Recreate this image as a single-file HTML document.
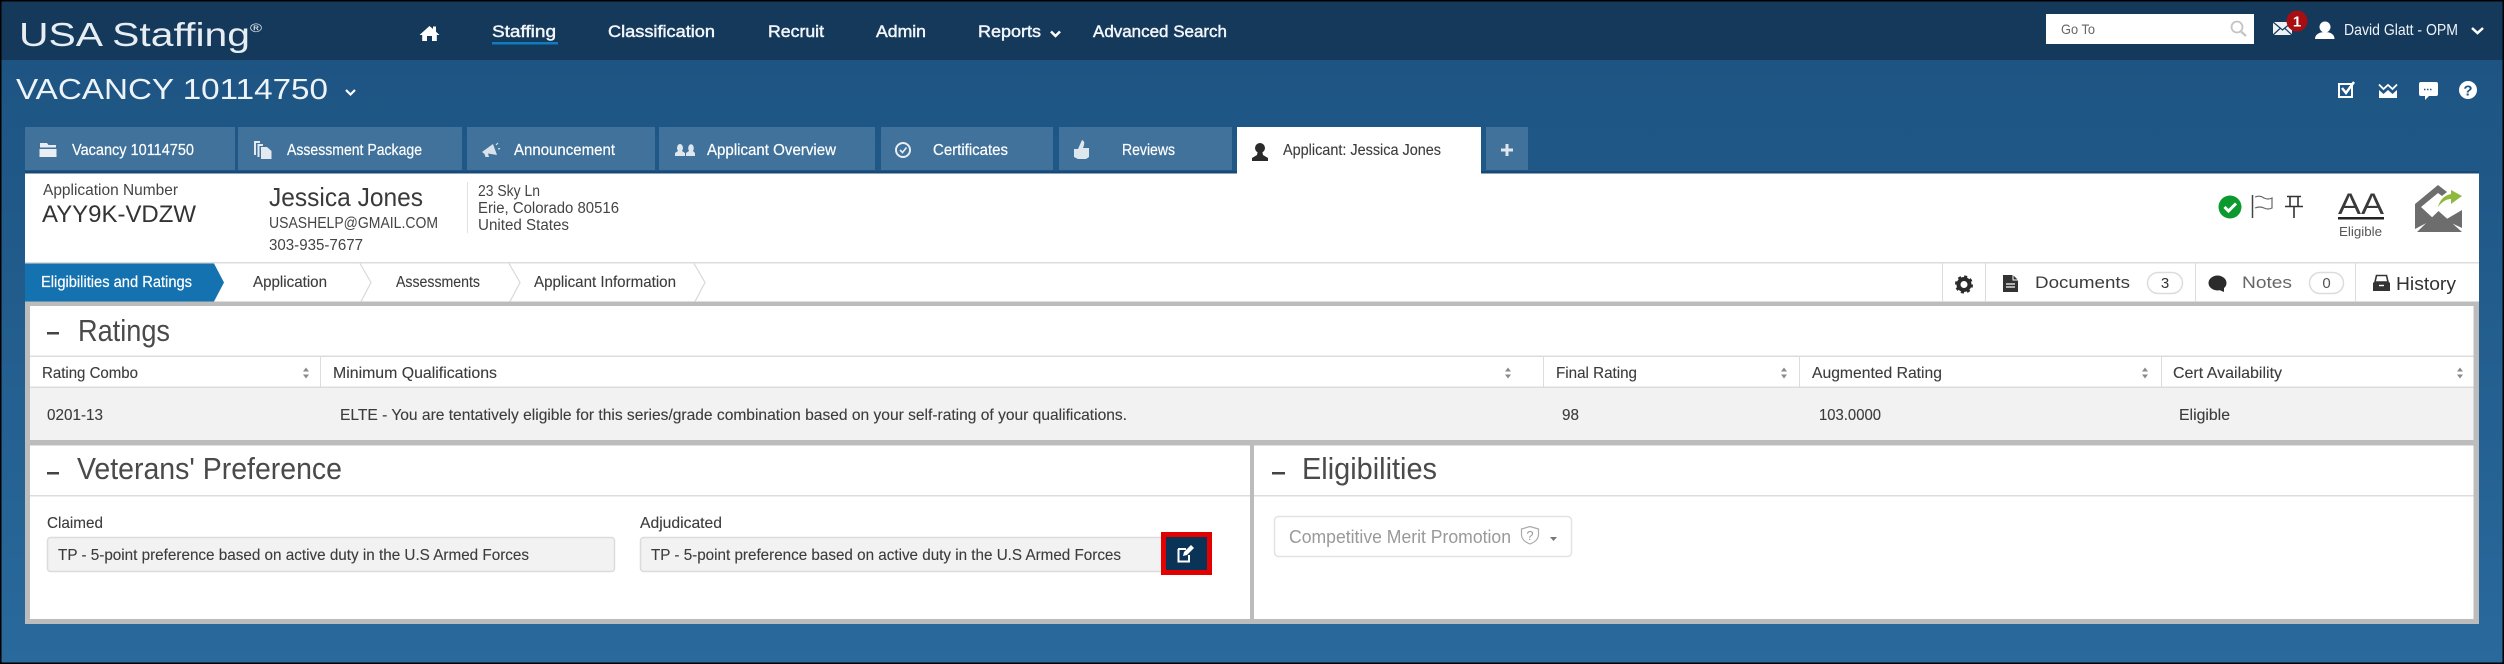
<!DOCTYPE html>
<html><head><meta charset="utf-8"><style>
html,body{margin:0;padding:0;background:#000}
svg{display:block}
text{font-family:"Liberation Sans",sans-serif;white-space:pre}
.n{font-size:16.500px;fill:#f2f6fa;stroke:#f2f6fa;stroke-width:.45px}
.t{font-size:15.500px;fill:#fff;stroke:#fff;stroke-width:.2px}
.d{font-size:15.800px;fill:#3c3c3c;stroke:#3c3c3c;stroke-width:.12px}
.h{font-size:31px;fill:#4a4a4a}
</style></head><body>
<svg xmlns="http://www.w3.org/2000/svg" width="2504" height="664" viewBox="0 0 2504 664">
<defs>
<linearGradient id="bg" x1="0" y1="0" x2="0" y2="1"><stop offset="0" stop-color="#1c5280"/><stop offset="1" stop-color="#29699c"/></linearGradient>
<g id="sort"><path d="M-3 -1.500 L0 -5.500 L3 -1.500Z M-3 1.500 L0 5.500 L3 1.500Z" fill="#8a8a8a"/></g>
</defs>
<rect width="2504" height="664" fill="#000"/>
<rect x="1.500" y="1.500" width="2501" height="661" fill="url(#bg)"/>
<rect x="1.500" y="1.500" width="2501" height="58.500" fill="#15395b"/>

<!-- header -->
<text x="19" y="46" font-size="33" fill="#e6edf3" textLength="231" lengthAdjust="spacingAndGlyphs">USA Staffing</text>
<text x="250" y="32" font-size="12" fill="#e8eef4" textLength="12" lengthAdjust="spacingAndGlyphs">®</text>
<path d="M429.500 26 L433 29 V26.500 H436 V31.800 L439.500 35 H436.800 V41 H432 V36 H427 V41 H422.200 V35 H419.500Z" fill="#fff"/>
<text class="n" x="492" y="37" textLength="64" lengthAdjust="spacingAndGlyphs">Staffing</text>
<rect x="492" y="42" width="66" height="2.500" fill="#0f7cc0"/>
<text class="n" x="608" y="37" textLength="107" lengthAdjust="spacingAndGlyphs">Classification</text>
<text class="n" x="768" y="37" textLength="56" lengthAdjust="spacingAndGlyphs">Recruit</text>
<text class="n" x="876" y="37" textLength="50" lengthAdjust="spacingAndGlyphs">Admin</text>
<text class="n" x="978" y="37" textLength="63" lengthAdjust="spacingAndGlyphs">Reports</text>
<path d="M1051 31.500 L1055.500 36 L1060 31.500" fill="none" stroke="#fff" stroke-width="2.500"/>
<text class="n" x="1093" y="37" textLength="134" lengthAdjust="spacingAndGlyphs">Advanced Search</text>

<rect x="2046" y="14" width="208" height="30" fill="#fff"/>
<text x="2061" y="34" font-size="14" fill="#666" textLength="34" lengthAdjust="spacingAndGlyphs">Go To</text>
<circle cx="2237" cy="27" r="5.500" fill="none" stroke="#c4c4c4" stroke-width="1.800"/><path d="M2241 31.500 L2246 36" stroke="#c4c4c4" stroke-width="2.200"/>
<path d="M2273 22 H2292 V35 H2273Z" fill="#eef2f6"/><path d="M2273 22 L2282.500 30 L2292 22 M2273 35 L2280 28.500 M2292 35 L2285 28.500" fill="none" stroke="#15395b" stroke-width="1.200"/>
<circle cx="2297" cy="21" r="10.500" fill="#a80d12"/>
<text x="2297" y="26.500" font-size="15" font-weight="700" fill="#fff" text-anchor="middle">1</text>
<circle cx="2325" cy="27" r="5.500" fill="#fff"/><path d="M2315 39 C2315 34 2320 32 2325 32 C2330 32 2334.500 34 2334.500 39Z" fill="#fff"/>
<text x="2344" y="35" font-size="16" fill="#eef3f8" textLength="114" lengthAdjust="spacingAndGlyphs">David Glatt - OPM</text>
<path d="M2472 28 L2477.500 33 L2483 28" fill="none" stroke="#fff" stroke-width="2.500"/>

<!-- title row -->
<text x="16" y="99" font-size="29" fill="#eef3f7" textLength="312" lengthAdjust="spacingAndGlyphs">VACANCY 10114750</text>
<path d="M346 90 L350.500 94.500 L355 90" fill="none" stroke="#fff" stroke-width="2.200"/>
<rect x="2339" y="84" width="13" height="13" fill="none" stroke="#fff" stroke-width="2"/><path d="M2342 88 L2346 93 L2354 82" fill="none" stroke="#fff" stroke-width="2.500"/>
<path d="M2379 84.500 L2383.500 89 L2388 85 L2392.500 89 L2397 84.500" fill="none" stroke="#fff" stroke-width="1.800"/><path d="M2379 90 L2383.500 94 L2388 90 L2392.500 94 L2397 90 V98 H2379Z" fill="#fff"/>
<path d="M2421 82 H2436 Q2438 82 2438 84 V94 Q2438 96 2436 96 H2429 L2425 100 V96 H2421 Q2419 96 2419 94 V84 Q2419 82 2421 82Z" fill="#fff"/><path d="M2424 89.500 H2433" stroke="#1d5481" stroke-width="1.500" stroke-dasharray="1.500 1.500"/>
<circle cx="2468" cy="90" r="9" fill="#fff"/><text x="2468" y="95.500" font-size="15" font-weight="700" fill="#1d5481" text-anchor="middle">?</text>

<!-- tabs -->
<g fill="#41729b">
<rect x="25" y="127" width="210" height="43"/><rect x="238" y="127" width="224" height="43"/><rect x="467" y="127" width="188" height="43"/><rect x="659" y="127" width="216" height="43"/><rect x="881" y="127" width="172" height="43"/><rect x="1059" y="127" width="173" height="43"/><rect x="1486" y="127" width="42" height="43"/>
</g>
<rect x="25" y="171" width="2454" height="2.500" fill="#174a76"/>
<rect x="1237" y="127" width="244" height="47" fill="#fff"/>
<path d="M40 143 H47 L48.500 145 H56 V147.500 H40Z M39.500 149 H56.500 V157 H39.500Z" fill="#e8eef3"/>
<path d="M254 141 H260 V143 H256 V155 H254Z M257.500 144 H263 V146 H259.500 V157 H257.500Z M261 147 H267 L271.500 151 V159 H261Z" fill="#e3eaf0"/>
<path d="M482 152 L493 144 L497 155 L488 153.500 L489 157 L485.500 157 L484.500 154Z" fill="#d8e2ea"/><path d="M496 145 L498 143 M498 149 L500 148.500" stroke="#d8e2ea" stroke-width="1.200"/>
<path d="M675 156 V153 L678 151 A3 4 0 1 1 682 151 L685 153 V156Z M686 156 V153 L689 151 A2.800 4 0 1 1 693 151 L695 153 V156Z" fill="#dfe7ee"/>
<circle cx="903" cy="150" r="7" fill="none" stroke="#e8eef3" stroke-width="2"/><path d="M900 150 L902.500 152.500 L906.500 147.500" fill="none" stroke="#e8eef3" stroke-width="1.600"/>
<path d="M1074 149 H1078 L1082 140 Q1085 141 1084 145 L1083 148 H1089 V157 L1086 159 H1078 L1074 157Z" fill="#dfe7ee"/>
<circle cx="1260" cy="148" r="5" fill="#2b2b2b"/><path d="M1258 150 H1262 L1263 155 L1268 158 V161 H1252 V158 L1257 155Z" fill="#2b2b2b"/>
<path d="M1505.500 144 H1508.500 V148.500 H1513 V151.500 H1508.500 V156 H1505.500 V151.500 H1501 V148.500 H1505.500Z" fill="#dfe7ee"/>
<text class="t" x="72" y="155" textLength="122" lengthAdjust="spacingAndGlyphs">Vacancy 10114750</text>
<text class="t" x="287" y="155" textLength="135" lengthAdjust="spacingAndGlyphs">Assessment Package</text>
<text class="t" x="514" y="155" textLength="101" lengthAdjust="spacingAndGlyphs">Announcement</text>
<text class="t" x="707" y="155" textLength="129" lengthAdjust="spacingAndGlyphs">Applicant Overview</text>
<text class="t" x="933" y="155" textLength="75" lengthAdjust="spacingAndGlyphs">Certificates</text>
<text class="t" x="1122" y="155" textLength="53" lengthAdjust="spacingAndGlyphs">Reviews</text>
<text class="d" x="1283" y="155" textLength="158" lengthAdjust="spacingAndGlyphs">Applicant: Jessica Jones</text>

<!-- white panel -->
<rect x="25" y="173.500" width="2454" height="450.500" fill="#bcbcbc"/>
<rect x="25" y="173.500" width="2454" height="128" fill="#fff"/>
<text x="43" y="195" font-size="16" fill="#444" textLength="135" lengthAdjust="spacingAndGlyphs">Application Number</text>
<text x="42" y="222" font-size="24" fill="#333" textLength="154" lengthAdjust="spacingAndGlyphs">AYY9K-VDZW</text>
<text x="269" y="206" font-size="26" fill="#3a3a3a" textLength="154" lengthAdjust="spacingAndGlyphs">Jessica Jones</text>
<text x="269" y="228" font-size="15.500" fill="#444" textLength="169" lengthAdjust="spacingAndGlyphs">USASHELP@GMAIL.COM</text>
<text x="269" y="250" font-size="15.500" fill="#444" textLength="94" lengthAdjust="spacingAndGlyphs">303-935-7677</text>
<rect x="467" y="182" width="1" height="51" fill="#e2e2e2"/>
<text x="478" y="196" font-size="15.500" fill="#444" textLength="62" lengthAdjust="spacingAndGlyphs">23 Sky Ln</text>
<text x="478" y="213" font-size="15.500" fill="#444" textLength="141" lengthAdjust="spacingAndGlyphs">Erie, Colorado 80516</text>
<text x="478" y="230" font-size="15.500" fill="#444" textLength="91" lengthAdjust="spacingAndGlyphs">United States</text>

<circle cx="2230" cy="207" r="11.500" fill="#0c9a2e"/><path d="M2224.500 207 L2228.500 211 L2236 203.500" fill="none" stroke="#fff" stroke-width="3"/>
<path d="M2252.500 195 V218" stroke="#444" stroke-width="1.500"/><path d="M2255 197 Q2260 195 2264 198 Q2268 200 2272 198 V208 Q2268 210 2264 208 Q2260 206 2255 208" fill="none" stroke="#666" stroke-width="1.200"/>
<path d="M2287 196.500 H2301 M2290 197 V206 M2298 197 V206 M2285 206.500 H2303 M2294 207 V218" fill="none" stroke="#333" stroke-width="1.600"/>
<text x="2338" y="214" font-size="30" fill="#3a3a3a" textLength="46" lengthAdjust="spacingAndGlyphs">AA</text>
<rect x="2338" y="217" width="46" height="2.500" fill="#222"/>
<text x="2339" y="236" font-size="13" fill="#555" textLength="43" lengthAdjust="spacingAndGlyphs">Eligible</text>
<path d="M2415 204 L2438 185 L2447 192 L2442 196 L2438 193 L2421 207 L2434 219 L2415 229Z" fill="#6d6d6d"/>
<path d="M2417 232 L2438.500 211 L2462 232Z M2462 210 V228 L2445 220Z" fill="#6d6d6d"/>
<path d="M2438 207 Q2441 196 2451 194 L2451 190 L2462 196 L2451 204 L2451 199 Q2444 199 2438 207Z" fill="#8fb93c"/>

<!-- sub nav -->
<rect x="25" y="262" width="2454" height="1.500" fill="#dcdcdc"/>
<path d="M25 263.500 H214 L224 282.500 L214 301.500 H25Z" fill="#1472b0"/>
<text x="41" y="287" font-size="15.500" fill="#fff" stroke="#fff" stroke-width=".2" textLength="151" lengthAdjust="spacingAndGlyphs">Eligibilities and Ratings</text>
<text class="d" x="253" y="287" textLength="74" lengthAdjust="spacingAndGlyphs">Application</text>
<path d="M360 263.500 L371 282.500 L361 301.500" fill="none" stroke="#d8d8d8" stroke-width="1.200"/>
<text class="d" x="396" y="287" textLength="84" lengthAdjust="spacingAndGlyphs">Assessments</text>
<path d="M509 263.500 L520 282.500 L510 301.500" fill="none" stroke="#d8d8d8" stroke-width="1.200"/>
<text class="d" x="534" y="287" textLength="142" lengthAdjust="spacingAndGlyphs">Applicant Information</text>
<path d="M694 263.500 L705 282.500 L695 301.500" fill="none" stroke="#d8d8d8" stroke-width="1.200"/>
<rect x="1985" y="263" width="1" height="39" fill="#dcdcdc"/><rect x="1942" y="263" width="1" height="39" fill="#dcdcdc"/><rect x="2195" y="263" width="1" height="39" fill="#dcdcdc"/><rect x="2355" y="263" width="1" height="39" fill="#dcdcdc"/>
<circle cx="1964" cy="284.500" r="5.500" fill="none" stroke="#2b2b2b" stroke-width="4"/><circle cx="1964" cy="284.500" r="7.800" fill="none" stroke="#2b2b2b" stroke-width="2.500" stroke-dasharray="3 3.100"/>
<path d="M2003 275 H2013 L2018 280 V292 H2003Z" fill="#333"/><path d="M2006 284 H2015 M2006 287 H2015" stroke="#fff" stroke-width="1.200"/><path d="M2013 275 V280 H2018" fill="none" stroke="#fff" stroke-width="1"/>
<text x="2035" y="288" font-size="17" fill="#3c3c3c" textLength="95" lengthAdjust="spacingAndGlyphs">Documents</text>
<rect x="2147.500" y="272.500" width="35" height="21" rx="10.500" fill="#fff" stroke="#dcdcdc" stroke-width="1.500"/>
<text x="2165" y="288" font-size="15" fill="#333" text-anchor="middle">3</text>
<ellipse cx="2217.500" cy="283" rx="9" ry="7.500" fill="#2b2b2b"/><path d="M2217 289 L2224 292 L2224 286Z" fill="#2b2b2b"/>
<text x="2242" y="288" font-size="17" fill="#666" textLength="50" lengthAdjust="spacingAndGlyphs">Notes</text>
<rect x="2309.500" y="272.500" width="34" height="21" rx="10.500" fill="#fff" stroke="#dcdcdc" stroke-width="1.500"/>
<text x="2326.500" y="288" font-size="15" fill="#555" text-anchor="middle">0</text>
<path d="M2376.500 275.500 H2386.500 L2388 282 H2375Z" fill="none" stroke="#333" stroke-width="1.600"/><path d="M2373 282.500 H2390 V291 H2373Z" fill="#333"/><path d="M2379 285.500 H2384" stroke="#fff" stroke-width="1.400"/>
<text x="2396" y="290" font-size="18" fill="#333" textLength="60" lengthAdjust="spacingAndGlyphs">History</text>

<!-- ratings -->
<rect x="30" y="306" width="2443.500" height="313" fill="#fff"/>
<rect x="47" y="332" width="12" height="2.500" fill="#444"/>
<text class="h" x="78" y="341" textLength="92" lengthAdjust="spacingAndGlyphs">Ratings</text>
<rect x="30" y="355.500" width="2443.500" height="1.500" fill="#dcdcdc"/>
<rect x="320" y="357" width="1" height="30" fill="#dcdcdc"/><rect x="1543" y="357" width="1" height="30" fill="#dcdcdc"/><rect x="1799" y="357" width="1" height="30" fill="#dcdcdc"/><rect x="2161" y="357" width="1" height="30" fill="#dcdcdc"/>
<text class="d" x="42" y="378" textLength="96" lengthAdjust="spacingAndGlyphs">Rating Combo</text>
<text class="d" x="333" y="378" textLength="164" lengthAdjust="spacingAndGlyphs">Minimum Qualifications</text>
<text class="d" x="1556" y="378" textLength="81" lengthAdjust="spacingAndGlyphs">Final Rating</text>
<text class="d" x="1812" y="378" textLength="130" lengthAdjust="spacingAndGlyphs">Augmented Rating</text>
<text class="d" x="2173" y="378" textLength="109" lengthAdjust="spacingAndGlyphs">Cert Availability</text>
<use href="#sort" x="306" y="373"/><use href="#sort" x="1508" y="373"/><use href="#sort" x="1784" y="373"/><use href="#sort" x="2145" y="373"/><use href="#sort" x="2460" y="373"/>
<rect x="30" y="386.500" width="2443.500" height="1.500" fill="#dcdcdc"/>
<rect x="30" y="388" width="2443.500" height="52" fill="#f2f2f2"/>
<text class="d" x="47" y="420" textLength="56" lengthAdjust="spacingAndGlyphs">0201-13</text>
<text class="d" x="340" y="420" textLength="787" lengthAdjust="spacingAndGlyphs">ELTE - You are tentatively eligible for this series/grade combination based on your self-rating of your qualifications.</text>
<text class="d" x="1562" y="420" textLength="17" lengthAdjust="spacingAndGlyphs">98</text>
<text class="d" x="1819" y="420" textLength="62" lengthAdjust="spacingAndGlyphs">103.0000</text>
<text class="d" x="2179" y="420" textLength="51" lengthAdjust="spacingAndGlyphs">Eligible</text>
<rect x="30" y="440" width="2443.500" height="5.500" fill="#bcbcbc"/>

<!-- veterans + eligibilities -->
<rect x="47" y="472" width="12" height="2.500" fill="#444"/>
<text class="h" x="77" y="479" textLength="265" lengthAdjust="spacingAndGlyphs">Veterans' Preference</text>
<rect x="1272" y="472" width="13" height="2.500" fill="#444"/>
<text class="h" x="1302" y="479" textLength="135" lengthAdjust="spacingAndGlyphs">Eligibilities</text>
<rect x="30" y="495" width="2443.500" height="1.500" fill="#dcdcdc"/>
<rect x="1250" y="445" width="4" height="174" fill="#bcbcbc"/>
<text class="d" x="47" y="528" textLength="56" lengthAdjust="spacingAndGlyphs">Claimed</text>
<text class="d" x="640" y="528" textLength="82" lengthAdjust="spacingAndGlyphs">Adjudicated</text>
<rect x="47.500" y="537.500" width="567" height="34" rx="3" fill="#f2f2f2" stroke="#dcdcdc" stroke-width="1.500"/>
<text class="d" x="58" y="560" textLength="471" lengthAdjust="spacingAndGlyphs">TP - 5-point preference based on active duty in the U.S Armed Forces</text>
<rect x="640.500" y="537.500" width="525" height="34" rx="3" fill="#f2f2f2" stroke="#dcdcdc" stroke-width="1.500"/>
<text class="d" x="651" y="560" textLength="470" lengthAdjust="spacingAndGlyphs">TP - 5-point preference based on active duty in the U.S Armed Forces</text>
<rect x="1161" y="532" width="51" height="43" fill="#e30000"/>
<rect x="1166" y="537" width="41" height="33" fill="#0a3358"/>
<path d="M1178 549 H1186 M1178.500 549 V561.500 H1189 V555" fill="none" stroke="#fff" stroke-width="2"/><path d="M1183 556 L1184 552 L1191 545 L1194 548 L1187 555Z" fill="#fff"/>
<rect x="1274.500" y="516.500" width="297" height="40" rx="4" fill="#fff" stroke="#e3e3e3" stroke-width="1.500"/>
<text x="1289" y="543" font-size="18.500" fill="#999" textLength="222" lengthAdjust="spacingAndGlyphs">Competitive Merit Promotion</text>
<path d="M1530 526.500 L1538.500 529 V535 Q1538 541 1530 544 Q1522 541 1521.500 535 V529Z" fill="none" stroke="#aaa" stroke-width="1.200"/>
<text x="1530" y="540" font-size="13" fill="#999" text-anchor="middle">?</text>
<path d="M1550 537 H1557 L1553.500 541Z" fill="#777"/>
</svg>
</body></html>
